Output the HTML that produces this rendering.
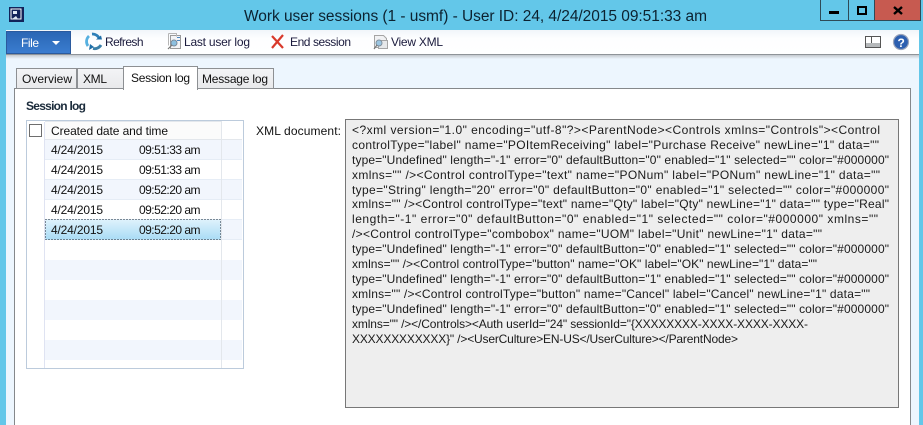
<!DOCTYPE html>
<html><head><meta charset="utf-8"><title>Work user sessions</title>
<style>
html,body{margin:0;padding:0;width:923px;height:425px;overflow:hidden;background:#63c7e9}
svg{position:absolute;left:0;top:0;display:block}
text{font-family:"Liberation Sans",sans-serif;font-size:12px;fill:#111;white-space:pre}
.x text{font-size:12px;fill:#1a1a1a}
</style></head><body>
<svg width="923" height="425" viewBox="0 0 923 425" xmlns="http://www.w3.org/2000/svg">
<defs>
<linearGradient id="tb" x1="0" y1="0" x2="0" y2="1"><stop offset="0" stop-color="#f1f5fa"/><stop offset=".35" stop-color="#fdfeff"/><stop offset="1" stop-color="#ffffff"/></linearGradient>
<linearGradient id="fb" x1="0" y1="0" x2="0" y2="1"><stop offset="0" stop-color="#2a66b4"/><stop offset="1" stop-color="#3b7dd0"/></linearGradient>
<linearGradient id="sel" x1="0" y1="0" x2="0" y2="1"><stop offset="0" stop-color="#dff2fc"/><stop offset="1" stop-color="#a9dcf5"/></linearGradient>
<linearGradient id="tab" x1="0" y1="0" x2="0" y2="1"><stop offset="0" stop-color="#f3f4f6"/><stop offset="1" stop-color="#e8e9eb"/></linearGradient>
<linearGradient id="sh" x1="0" y1="0" x2="0" y2="1"><stop offset="0" stop-color="#c4c9ce"/><stop offset="1" stop-color="#edf6fe"/></linearGradient>
</defs>

<!-- window body -->
<rect x="6" y="30" width="913" height="395" fill="#edf6fe"/>
<!-- title bar -->
<rect x="9" y="7" width="15" height="15" fill="#12235a"/>
<path d="M11 9h10v10h-10z" fill="none" stroke="#fff" stroke-width="1"/>
<path d="M13 11h4v3h-4zM18.500 12v5M20 11v6M12 19l4-3 2 3z" fill="#dfe8f4"/>
<text x="244" y="21" textLength="463" lengthAdjust="spacing" style="font-size:15.5px;fill:#0c2230">Work user sessions (1 - usmf) - User ID: 24, 4/24/2015 09:51:33 am</text>
<!-- window buttons -->
<rect x="820.500" y="-1" width="28" height="21.500" fill="#63c7e9" stroke="#2e4a57"/>
<rect x="848.500" y="-1" width="26" height="21.500" fill="#63c7e9" stroke="#2e4a57"/>
<rect x="874.500" y="-1" width="46" height="21.500" fill="#c75a50" stroke="#2e4a57"/>
<rect x="829" y="11" width="10" height="3" fill="#000"/>
<rect x="858" y="7" width="8" height="7" fill="none" stroke="#000" stroke-width="2"/>
<path d="M894 7l8 7M902 7l-8 7" stroke="#000" stroke-width="2.400" fill="none"/>

<!-- toolbar -->
<rect x="6" y="30" width="913" height="24" fill="url(#tb)"/>
<rect x="6" y="54" width="913" height="1" fill="#8f9499"/>
<rect x="6" y="55" width="913" height="4" fill="url(#sh)"/>
<rect x="6.500" y="31.500" width="64" height="22" fill="url(#fb)" stroke="#2a5a9e"/>
<text x="21" y="47" textLength="18" style="fill:#fff">File</text>
<path d="M52 41h8l-4 4z" fill="#fff"/>

<!-- refresh icon -->
<path d="M92 34a7.500 7.500 0 0 1 7.500 5" fill="none" stroke="#2f7fb8" stroke-width="2.800"/>
<path d="M101 45a7.500 7.500 0 0 1-8 3.500" fill="none" stroke="#3a7fa8" stroke-width="2.800"/>
<path d="M88 46a7.500 7.500 0 0 1 1-10" fill="none" stroke="#56b0e0" stroke-width="2.800"/>
<path d="M96 39.500h6l-1-4zM90 44l-1 6 5-3z" fill="#1f6ea8"/>
<text x="105" y="46" textLength="38.500" style="fill:#1a1a3c">Refresh</text>

<!-- last user log icon -->
<path d="M170.500 35.500h10v13h-10z" fill="#f3f4f6" stroke="#9a9a9a"/>
<path d="M168.500 33.500h8v3M168.500 33.500v12" fill="none" stroke="#b5b5b5"/>
<circle cx="174" cy="43" r="3" fill="#8cc0e0" stroke="#7a8a99"/>
<path d="M172 45l-4 4" stroke="#777" stroke-width="1.200"/>
<path d="M177 37h3v1h-3zM177 40h3v1h-3z" fill="#4b86c0"/>
<text x="184" y="46" textLength="66" style="fill:#1a1a3c">Last user log</text>

<!-- end session X -->
<path d="M272 36l11 12M283 35l-11 13" stroke="#d8392b" stroke-width="2.200" fill="none"/>
<text x="290" y="46" textLength="61" style="fill:#1a1a3c">End session</text>

<!-- view xml icon -->
<path d="M374.500 35.500h9l3 3v9h-12z" fill="#f1f2f4" stroke="#a5a5a5"/>
<path d="M378.500 40.500h9v8h-9z" fill="#e6e8ea" stroke="#a5a5a5"/>
<circle cx="379" cy="43" r="3" fill="#9cc6e2" stroke="#7f8f9c"/>
<path d="M377 45l-3 4" stroke="#777" stroke-width="1.200"/>
<text x="391" y="46" textLength="52" style="fill:#1a1a3c">View XML</text>

<!-- layout icon -->
<rect x="865.500" y="36.500" width="15" height="11" fill="#fff" stroke="#555"/>
<rect x="866" y="43" width="14" height="4" fill="#b5b8ba"/>
<path d="M871.500 37v6" stroke="#555"/>
<!-- help icon -->
<circle cx="901" cy="42" r="7.500" fill="#2c5fb0" stroke="#9aa4ba" stroke-width="1.200"/>
<text x="897.500" y="47" style="font-size:12px;font-weight:bold;fill:#fff">?</text>

<!-- tab panel -->
<rect x="14.500" y="88.500" width="896" height="340" fill="#fff" stroke="#85888b"/>

<!-- tabs -->
<path d="M16.500 88.500v-20h60v20z" fill="url(#tab)" stroke="#8d9093"/>
<path d="M77.500 88.500v-20h46v20z" fill="url(#tab)" stroke="#8d9093"/>
<path d="M197.500 88.500v-20h76v20z" fill="url(#tab)" stroke="#8d9093"/>
<path d="M123.500 90v-23.500h74V90" fill="#fff" stroke="#8d9093"/>
<rect x="124" y="87" width="73" height="4" fill="#fff"/>
<text x="22" y="83" textLength="50">Overview</text>
<text x="83" y="83" textLength="24">XML</text>
<text x="131" y="82" textLength="59">Session log</text>
<text x="202" y="83" textLength="66">Message log</text>

<!-- group label -->
<text x="26" y="110" textLength="60" style="font-weight:bold;fill:#1a2a3a">Session log</text>

<!-- grid -->
<rect x="26.500" y="120.500" width="217" height="248" fill="#fff" stroke="#bccbdc"/>
<g fill="#f2f6fd">
<rect x="45" y="140" width="197" height="19.500"/>
<rect x="45" y="180" width="197" height="19.500"/>
<rect x="45" y="220" width="197" height="19.500"/>
<rect x="45" y="260" width="197" height="20"/>
<rect x="45" y="300" width="197" height="20"/>
<rect x="45" y="340" width="197" height="20"/>
</g>
<path d="M45 159.500h197M45 179.500h197M45 199.500h197M45 219.500h197M45 239.500h197" stroke="#e6edf6"/>
<rect x="45" y="121.500" width="177" height="18" fill="#fbfbfb"/>
<path d="M44.500 122v246" stroke="#dfe3f2"/>
<path d="M221.500 122v246" stroke="#e3e7ec"/>
<path d="M45 121.500h177M45 139.500h197" stroke="#e3e7ec"/>
<rect x="29.500" y="124.500" width="12" height="12" fill="#fff" stroke="#6e6e6e"/>
<text x="51" y="135" textLength="117">Created date and time</text>

<rect x="45.500" y="219.500" width="175" height="20" fill="url(#sel)"/>
<rect x="45.500" y="219.500" width="175" height="20" fill="none" stroke="#123" stroke-dasharray="1 2" shape-rendering="crispEdges"/>
<text x="51" y="154" textLength="52">4/24/2015</text><text x="139" y="154" textLength="61.500">09:51:33 am</text>
<text x="51" y="174" textLength="52">4/24/2015</text><text x="139" y="174" textLength="61.500">09:51:33 am</text>
<text x="51" y="194" textLength="52">4/24/2015</text><text x="139" y="194" textLength="61.500">09:52:20 am</text>
<text x="51" y="214" textLength="52">4/24/2015</text><text x="139" y="214" textLength="61.500">09:52:20 am</text>
<text x="51" y="234" textLength="52">4/24/2015</text><text x="139" y="234" textLength="61.500">09:52:20 am</text>

<!-- xml -->
<text x="256" y="135" textLength="85">XML document:</text>
<rect x="345.500" y="119.500" width="553" height="288" fill="#eeeeee" stroke="#777"/>
<g class="x">
<text x="352" y="134" textLength="528">&lt;?xml version="1.0" encoding="utf-8"?&gt;&lt;ParentNode&gt;&lt;Controls xmlns="Controls"&gt;&lt;Control</text>
<text x="352" y="149" textLength="527">controlType="label" name="POItemReceiving" label="Purchase Receive" newLine="1" data=""</text>
<text x="352" y="164" textLength="537">type="Undefined" length="-1" error="0" defaultButton="0" enabled="1" selected="" color="#000000"</text>
<text x="352" y="179" textLength="528">xmlns="" /&gt;&lt;Control controlType="text" name="PONum" label="PONum" newLine="1" data=""</text>
<text x="352" y="194" textLength="537">type="String" length="20" error="0" defaultButton="0" enabled="1" selected="" color="#000000"</text>
<text x="352" y="208" textLength="537">xmlns="" /&gt;&lt;Control controlType="text" name="Qty" label="Qty" newLine="1" data="" type="Real"</text>
<text x="352" y="223" textLength="526">length="-1" error="0" defaultButton="0" enabled="1" selected="" color="#000000" xmlns=""</text>
<text x="352" y="238" textLength="470">/&gt;&lt;Control controlType="combobox" name="UOM" label="Unit" newLine="1" data=""</text>
<text x="352" y="253" textLength="537">type="Undefined" length="-1" error="0" defaultButton="0" enabled="1" selected="" color="#000000"</text>
<text x="352" y="268" textLength="465">xmlns="" /&gt;&lt;Control controlType="button" name="OK" label="OK" newLine="1" data=""</text>
<text x="352" y="283" textLength="537">type="Undefined" length="-1" error="0" defaultButton="1" enabled="1" selected="" color="#000000"</text>
<text x="352" y="298" textLength="518">xmlns="" /&gt;&lt;Control controlType="button" name="Cancel" label="Cancel" newLine="1" data=""</text>
<text x="352" y="313" textLength="537">type="Undefined" length="-1" error="0" defaultButton="0" enabled="1" selected="" color="#000000"</text>
<text x="352" y="328" textLength="456">xmlns="" /&gt;&lt;/Controls&gt;&lt;Auth userId="24" sessionId="{XXXXXXXX-XXXX-XXXX-XXXX-</text>
<text x="352" y="343" textLength="386">XXXXXXXXXXXX}" /&gt;&lt;UserCulture&gt;EN-US&lt;/UserCulture&gt;&lt;/ParentNode&gt;</text>
</g>
</svg>
</body></html>
